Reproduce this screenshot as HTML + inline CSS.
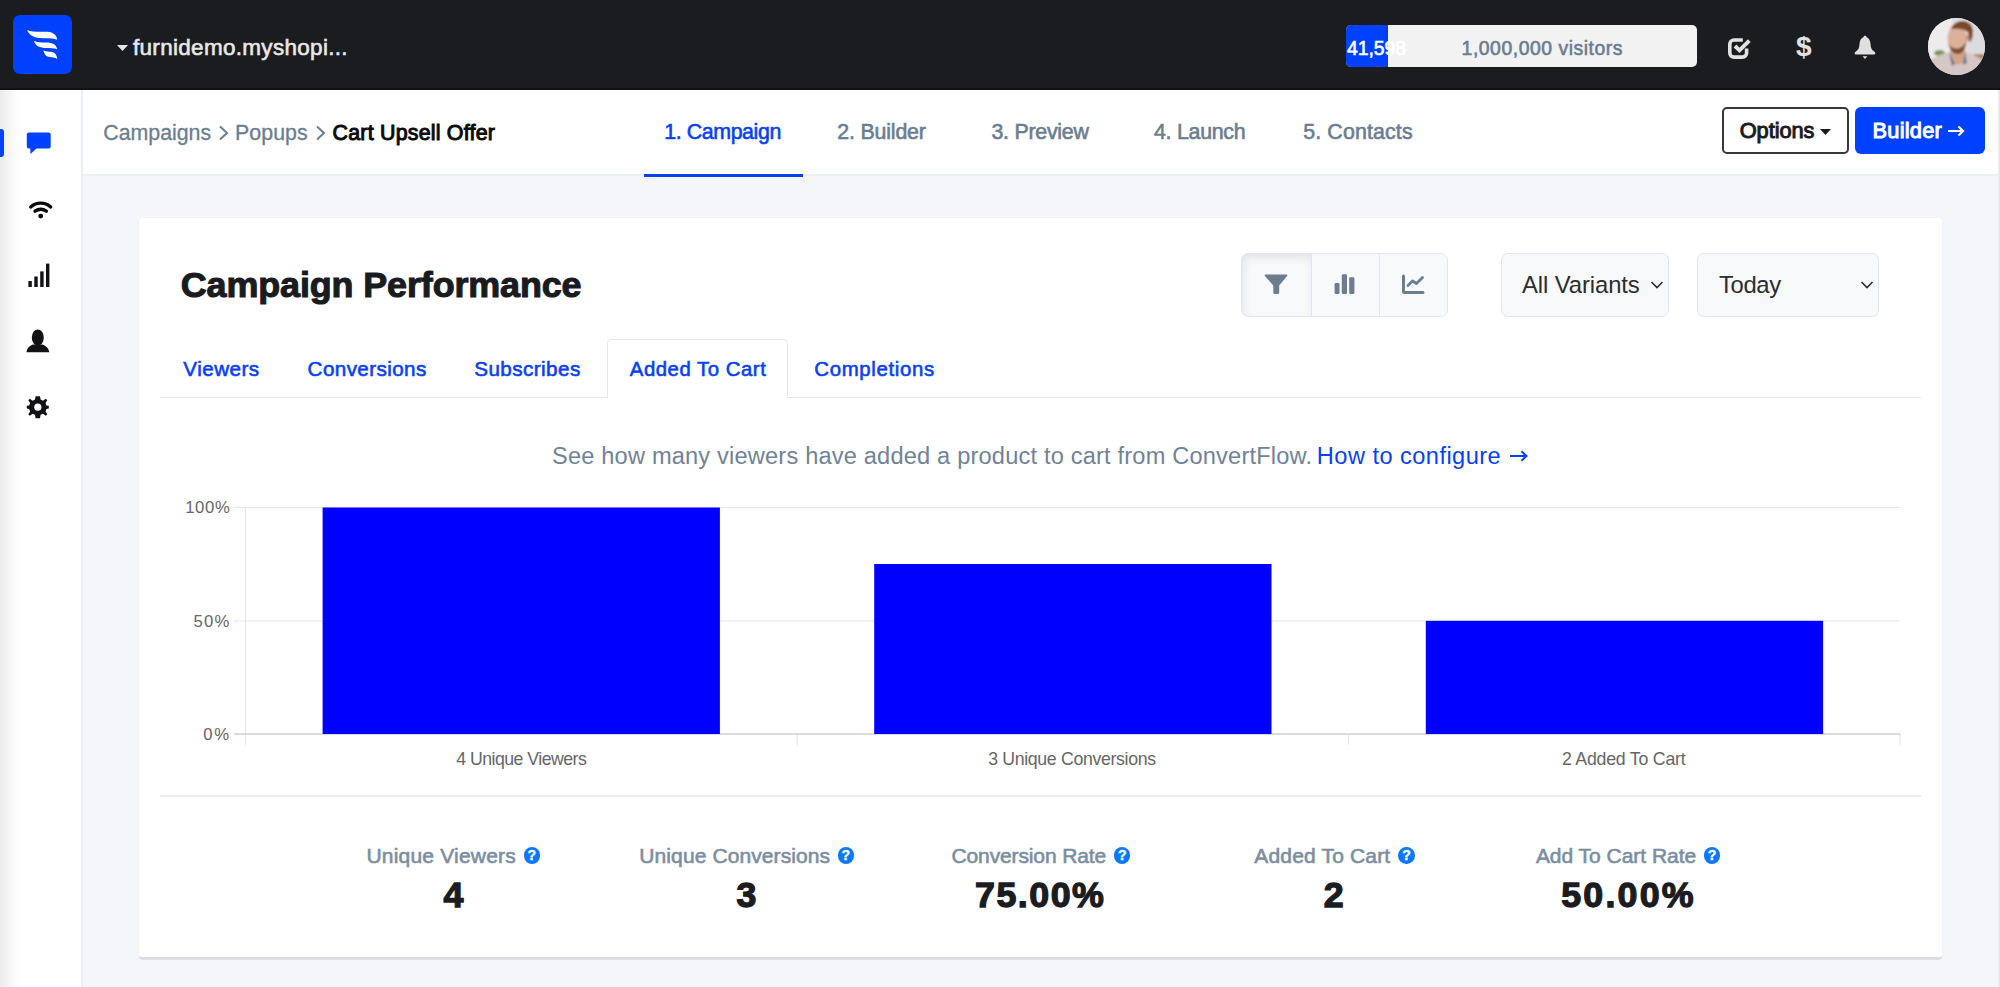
<!DOCTYPE html>
<html><head><meta charset="utf-8">
<style>
*{box-sizing:border-box;margin:0;padding:0}
html,body{width:2000px;height:987px;overflow:hidden;background:#f5f6f9;font-family:"Liberation Sans",sans-serif}
.a{position:absolute;white-space:nowrap}
#top{position:absolute;left:0;top:0;width:2000px;height:90px;background:#1b1c1f}
#side{position:absolute;left:0;top:90px;width:81px;height:897px;background:linear-gradient(90deg,#ebebec 0,#fafafa 14px,#fff 22px)}
#sideb{position:absolute;left:81px;top:90px;width:2px;height:897px;background:#e9eef8}
#sub{position:absolute;left:83px;top:90px;width:1917px;height:86px;background:#fff;border-bottom:2px solid #ebeff6}
#card{position:absolute;left:138px;top:217px;width:1805px;height:743px;background:#fff;border-radius:5px;border:1px solid #f1f2f5;border-bottom:3.5px solid #dcdde2}
.tb{color:#0b3ff2}
.sb{font-weight:normal;-webkit-text-stroke:0.6px currentColor}
.slate{color:#6b7d90}
.L{line-height:1}
.st{top:845.3px;font-size:21px;color:#7b8ea0}
.sv{top:877.6px;font-size:35.8px;font-weight:bold;color:#1b1c1f;-webkit-text-stroke:1.3px #1b1c1f}
.q{top:847.1px;width:16.6px;height:16.6px;border-radius:50%;background:#0b78fa;color:#fff;font-size:14px;font-weight:bold;text-align:center;line-height:17px;-webkit-text-stroke:0.4px #fff}
.q::after{content:"?"}
</style></head><body>
<div id="top"><div class="a" style="left:0;top:88px;width:2000px;height:2px;background:#111214"></div>
  <div class="a" style="left:13px;top:15px;width:59px;height:59px;border-radius:7px;background:#0041ff">
    <svg width="59" height="59" viewBox="0 0 59 59"><g fill="#fff">
      <path d="M14,15 C18,17 24,16.8 32,16.8 C38.5,16.8 43.5,18.5 44.2,24.8 C40,23 36,23.2 30,23.2 C22,23.2 16.5,21 14,15 Z"/>
      <path d="M21,26 C24,27.5 28,27.5 33,27.5 C39.5,27.5 43.5,29.5 44.2,34.3 C41,33 37,33 33,33 C27,33 22.5,31 21,26 Z"/>
      <path d="M30.5,35.5 C33,36.5 35.5,36.6 38,36.8 C41.5,37.2 43.8,39.5 44.2,44 C42,42.3 39,42.2 37,42 C33.5,41.7 31.2,39.8 30.5,35.5 Z"/>
    </g></svg>
  </div>
  <svg class="a" style="left:116px;top:44px" width="13" height="8" viewBox="0 0 13 8"><path d="M1,1 L12,1 L6.5,7 Z" fill="#e6e6e6"/></svg>
  <div class="a L sb" id="shop" style="left:133.0px;top:36.5px;font-size:22.48px;letter-spacing:0.316px;color:#e8e8e8">furnidemo.myshopi...</div>
  <div class="a" style="left:1346px;top:25px;width:351px;height:42px;border-radius:5px;background:#f2f2f3;overflow:hidden">
    <div class="a" style="left:0;top:0;width:42px;height:42px;background:#0041ff"></div>
    <div class="a L sb" id="pv" style="left:1px;top:13.6px;font-size:19.33px;letter-spacing:0.000px;color:#fff">41,598</div>
    <div class="a L sb" id="pt" style="left:115.6px;top:13.6px;font-size:19.33px;letter-spacing:0.553px;color:#6b7d90">1,000,000 visitors</div>
  </div>
  <svg class="a" style="left:1720px;top:30px" width="40" height="35" viewBox="1720 30 40 35">
    <path d="M1742.8,40 H1734 a4.2,4.2 0 0 0 -4.2,4.2 V52.9 a4.2,4.2 0 0 0 4.2,4.2 H1742.4 a4.2,4.2 0 0 0 4.2,-4.2 V48.6" fill="none" stroke="#e2e2e2" stroke-width="3.6"/>
    <path d="M1735,46 L1739.5,50.3 L1749.3,40.6" fill="none" stroke="#e2e2e2" stroke-width="3.9" stroke-linejoin="miter"/>
  </svg>
  <div class="a L" id="dol" style="left:1796px;top:33.2px;font-size:28px;font-weight:bold;color:#e2e2e2">$</div>
  <svg class="a" style="left:1850px;top:30px" width="30" height="32" viewBox="1850 30 30 32">
    <path d="M1865,35.8 C1866,35.8 1866.6,36.5 1866.6,37.3 C1869.2,38.2 1870.2,40.5 1870.5,44 C1870.8,48 1871.7,50 1874.2,51.4 C1875.9,52.3 1875.6,54.6 1873.6,54.6 H1856.4 C1854.4,54.6 1854.1,52.3 1855.8,51.4 C1858.3,50 1859.2,48 1859.5,44 C1859.8,40.5 1860.8,38.2 1863.4,37.3 C1863.4,36.5 1864,35.8 1865,35.8 Z M1862.6,56.2 H1867.4 L1865,59 Z" fill="#e0e0e0"/>
  </svg>
  <div class="a" style="left:1928px;top:18px;width:57px;height:57px;border-radius:50%;overflow:hidden;background:#e2dfe2">
    <svg width="57" height="57" viewBox="0 0 57 57">
      <defs><filter id="bl" x="-20%" y="-20%" width="140%" height="140%"><feGaussianBlur stdDeviation="0.9"/></filter></defs>
      <g filter="url(#bl)">
      <rect x="-2" y="-2" width="61" height="61" fill="#e2dfe2"/>
      <rect x="-2" y="-2" width="26" height="42" fill="#eeebed"/>
      <rect x="40" y="-2" width="19" height="38" fill="#dcdce0"/>
      <ellipse cx="11.5" cy="35" rx="5.5" ry="3" fill="#6f9a55"/>
      <rect x="46" y="36" width="10" height="5" fill="#b5876a"/>
      <path d="M-2,59 L-2,44 C8,38 16,35 22,34 L38,34 C45,36 52,40 59,45 L59,59 Z" fill="#d6c7c7"/>
      <path d="M22,30 L37,30 L38,42 C33,48 26,48 22,42 Z" fill="#d3a38a"/>
      <path d="M21,34 L24,48 L27,46 Z M37,34 L35,47 L39,45 Z" fill="#6a7390"/>
      <ellipse cx="29" cy="20" rx="9.5" ry="13" fill="#dcb09a"/>
      <ellipse cx="40" cy="20" rx="2.2" ry="3.5" fill="#c99378"/>
      <path d="M23,11 C25,4 33,2 38,3.5 C43,5 45.5,10 45,16 C44.5,20 43.5,23 42,24 L40,14 C36,11 30,10 23,11 Z" fill="#7a4a2c"/>
      <path d="M20,25 C22,33 26,36 30,36 C34,36 37.5,32 38.5,23 C36,28 33,30 30,30.5 C26,31 22,29 20,25 Z" fill="#7c4d30"/>
      </g>
    </svg>
  </div>
</div>

<div id="side"></div>
<div id="sideb"></div>
<div class="a" style="left:0;top:129px;width:4px;height:28px;background:#0041ff;border-radius:0 3px 3px 0"></div>
<svg class="a" style="left:0;top:90px" width="81" height="340" viewBox="0 90 81 340">
  <g fill="#0041ff"><rect x="26.8" y="132.6" width="23.9" height="15.8" rx="2"/><path d="M30.2,147.5 L30.5,154 L37.5,147.5 Z"/></g>
  <g fill="none" stroke="#0a0a0a" stroke-width="3.3" stroke-linecap="round">
    <path d="M30.7,206.9 A15.2,15.2 0 0 1 50.7,206.9"/>
    <path d="M35,211.2 A10,10 0 0 1 46.4,211.2"/>
  </g>
  <circle cx="40.7" cy="216.1" r="2.45" fill="#0a0a0a"/>
  <g fill="#121214">
    <rect x="28.4" y="281" width="3.4" height="6"/>
    <rect x="34.3" y="276.5" width="3.4" height="10.5"/>
    <rect x="40.2" y="271.4" width="3.4" height="15.6"/>
    <rect x="46" y="263.6" width="3.4" height="23.4"/>
    <ellipse cx="37.8" cy="337.5" rx="6" ry="8"/>
    <path d="M33,344.5 L42.5,344.5 C46,346 48.5,348 49.3,352.3 H26.4 C27,348 29.5,346 33,344.5 Z"/>
  </g>
  <g transform="translate(37.8,407.2)">
    <path fill="#121214" d="M-2.2,-11 H2.2 L2.8,-7.6 L5.2,-6.5 L8,-8.5 L9.5,-7 L7.7,-4.2 L8.6,-1.8 L11,-1.4 V1.4 L8.6,1.8 L7.7,4.2 L9.5,7 L8,8.5 L5.2,6.5 L2.8,7.6 L2.2,11 H-2.2 L-2.8,7.6 L-5.2,6.5 L-8,8.5 L-9.5,7 L-7.7,4.2 L-8.6,1.8 L-11,1.4 V-1.4 L-8.6,-1.8 L-7.7,-4.2 L-9.5,-7 L-8,-8.5 L-5.2,-6.5 L-2.8,-7.6 Z"/>
    <circle r="3.6" fill="#fff"/>
  </g>
</svg>

<div id="sub">
</div>
<div class="a slate L" id="bc1" style="left:103.3px;top:122.9px;font-size:21.37px;letter-spacing:-0.025px;-webkit-text-stroke:0.3px currentColor">Campaigns</div>
<svg class="a" style="left:218px;top:125px" width="12" height="16" viewBox="0 0 12 16"><path d="M2,1.5 L9,8 L2,14.5" fill="none" stroke="#6b7d90" stroke-width="2"/></svg>
<div class="a slate L" id="bc2" style="left:235px;top:122.9px;font-size:21.37px;letter-spacing:0.06px;-webkit-text-stroke:0.3px currentColor">Popups</div>
<svg class="a" style="left:315px;top:125px" width="12" height="16" viewBox="0 0 12 16"><path d="M2,1.5 L9,8 L2,14.5" fill="none" stroke="#6b7d90" stroke-width="2"/></svg>
<div class="a L sb" id="bc3" style="left:332.6px;top:122.9px;font-size:21.37px;letter-spacing:0.225px;color:#0a0a0a;-webkit-text-stroke:1px #0a0a0a">Cart Upsell Offer</div>

<div class="a L sb" id="t1" style="left:664.2px;top:122.2px;font-size:21.37px;letter-spacing:-0.400px;color:#0b3ff2">1. Campaign</div>
<div class="a" style="left:644px;top:174px;width:159px;height:3px;background:#0b3ff2"></div>
<div class="a slate L sb" id="t2" style="left:837.3px;top:122.2px;font-size:21.37px;letter-spacing:-0.178px">2. Builder</div>
<div class="a slate L sb" id="t3" style="left:991.5px;top:122.2px;font-size:21.37px;letter-spacing:-0.267px">3. Preview</div>
<div class="a slate L sb" id="t4" style="left:1154.0px;top:122.2px;font-size:21.37px;letter-spacing:-0.275px">4. Launch</div>
<div class="a slate L sb" id="t5" style="left:1303.2px;top:122.2px;font-size:21.37px;letter-spacing:0.140px">5. Contacts</div>

<div class="a" style="left:1722px;top:107px;width:127px;height:47px;border:2px solid #38383b;border-radius:5px;background:#fff"></div>
<div class="a L sb" id="opt" style="left:1739.7px;top:119.8px;font-size:21.8px;letter-spacing:-0.050px;color:#1b1b1d;-webkit-text-stroke:1px #1b1b1d">Options</div>
<svg class="a" style="left:1819px;top:128px" width="13" height="8" viewBox="0 0 13 8"><path d="M1,1 L12,1 L6.5,7 Z" fill="#1b1b1d"/></svg>
<div class="a" style="left:1855px;top:107px;width:130px;height:47px;border-radius:6px;background:#0041ff"></div>
<div class="a L sb" id="bld" style="left:1872.6px;top:119.8px;font-size:21.8px;letter-spacing:0.233px;color:#fff;-webkit-text-stroke:1px #fff">Builder</div>
<svg class="a" style="left:1947px;top:125px" width="18" height="12" viewBox="0 0 18 12"><path d="M1,6 H16 M11.5,1.5 L16,6 L11.5,10.5" fill="none" stroke="#fff" stroke-width="2.2"/></svg>
<div class="a" style="left:1998px;top:90px;width:2px;height:897px;background:linear-gradient(90deg,#f0f0f0,#e4e4e4)"></div>

<div id="card"></div>
<div class="a L" id="title" style="left:180.8px;top:267.9px;font-size:35.9px;letter-spacing:-0.111px;font-weight:bold;color:#1a1b1e;-webkit-text-stroke:1.1px #1a1b1e">Campaign Performance</div>

<div class="a" style="left:1241px;top:253px;width:207px;height:64px;border:1px solid #e4e5ec;border-radius:7px;background:#f8f9fb;overflow:hidden">
  <div class="a" style="left:0;top:0;width:69px;height:62px;box-shadow:inset 2px 4px 8px rgba(0,0,0,0.09)"></div>
  <div class="a" style="left:69px;top:0;width:1px;height:62px;background:#e4e5ec"></div>
  <div class="a" style="left:137px;top:0;width:1px;height:62px;background:#e4e5ec"></div>
</div>
<svg class="a" style="left:1241px;top:253px" width="207" height="64" viewBox="1241 253 207 64">
  <path d="M1265.5,274.5 H1286.5 C1287.3,274.5 1287.6,275.4 1287.1,276 L1279.2,285.5 V292.5 C1279.2,293.5 1278.5,294 1277.5,294 H1275 C1274,294 1273.3,293.5 1273.3,292.5 V285.5 L1264.9,276 C1264.4,275.4 1264.7,274.5 1265.5,274.5 Z" fill="#6c7d8f"/>
  <rect x="1334.6" y="283" width="4.9" height="11" rx="1.2" fill="#6c7d8f"/>
  <rect x="1341.8" y="274.3" width="5.2" height="19.7" rx="1.2" fill="#6c7d8f"/>
  <rect x="1349.2" y="277.2" width="5.2" height="16.8" rx="1.2" fill="#6c7d8f"/>
  <path d="M1403.5,276 V291.5 C1403.5,292 1403.8,292.5 1404.5,292.5 H1423" fill="none" stroke="#6c7d8f" stroke-width="3" stroke-linecap="round"/>
  <path d="M1408,285.5 L1412.5,281 L1416.5,283.5 L1422.5,277.5" fill="none" stroke="#6c7d8f" stroke-width="2.8" stroke-linecap="round" stroke-linejoin="round"/>
</svg>

<div class="a" style="left:1501px;top:253px;width:168px;height:64px;border:1px solid #e4e5ec;border-radius:7px;background:#f8f9fb"></div>
<div class="a L" id="var" style="left:1522px;top:273.4px;font-size:23.84px;letter-spacing:-0.091px;color:#2b2d31">All Variants</div>
<svg class="a" style="left:1650px;top:280px" width="14" height="10" viewBox="0 0 14 10"><path d="M1.5,2 L7,7.5 L12.5,2" fill="none" stroke="#2b2d31" stroke-width="1.6"/></svg>
<div class="a" style="left:1697px;top:253px;width:182px;height:64px;border:1px solid #e4e5ec;border-radius:7px;background:#f8f9fb"></div>
<div class="a L" id="today" style="left:1719px;top:273.4px;font-size:23.84px;letter-spacing:-0.35px;color:#2b2d31">Today</div>
<svg class="a" style="left:1860px;top:280px" width="14" height="10" viewBox="0 0 14 10"><path d="M1.5,2 L7,7.5 L12.5,2" fill="none" stroke="#2b2d31" stroke-width="1.6"/></svg>

<div class="a" style="left:160px;top:397px;width:1761px;height:1px;background:#e4e6ec"></div>
<div class="a" style="left:607px;top:339px;width:181px;height:59px;border:1px solid #e4e6ec;border-bottom:none;border-radius:5px 5px 0 0;background:#fff"></div>
<div class="a L tb sb" id="tv" style="left:183.3px;top:358.7px;font-size:20.64px;letter-spacing:0.467px">Viewers</div>
<div class="a L tb sb" id="tc" style="left:307.6px;top:358.7px;font-size:20.64px;letter-spacing:0.400px">Conversions</div>
<div class="a L tb sb" id="ts" style="left:474.2px;top:358.7px;font-size:20.64px;letter-spacing:0.444px">Subscribes</div>
<div class="a L tb sb" id="ta" style="left:629.8px;top:358.5px;font-size:20.35px;letter-spacing:0.525px">Added To Cart</div>
<div class="a L tb sb" id="tco" style="left:814.3px;top:358.5px;font-size:20.35px;letter-spacing:0.680px">Completions</div>

<div class="a L slate" id="desc" style="color:#718396;left:552px;top:444.8px;font-size:23.62px;letter-spacing:0.182px">See how many viewers have added a product to cart from ConvertFlow.</div>
<div class="a L" id="link" style="left:1316.8px;top:444.8px;font-size:23.62px;letter-spacing:0.45px;color:#0b3ff2">How to configure</div>
<svg class="a" style="left:1509px;top:449px" width="20" height="14" viewBox="0 0 20 14"><path d="M1,7 H17.5 M12.5,2.2 L17.5,7 L12.5,11.8" fill="none" stroke="#0b3ff2" stroke-width="2"/></svg>

<svg class="a" style="left:0;top:0" width="2000" height="800" viewBox="0 0 2000 800">
  <g stroke="#e5e5e5" stroke-width="1.2">
    <path d="M234,507.5 H1900 M234,621 H1900"/>
    <path d="M245.5,507 V745"/>
    <path d="M797,734 V745 M1348.5,734 V745 M1900,734 V745"/>
  </g>
  <path d="M234,734 H1900" stroke="#cfcfcf" stroke-width="1.4"/>
  <g fill="#0000ff">
    <rect x="322.6" y="507.5" width="397.3" height="226.5"/>
    <rect x="874.2" y="564" width="397.3" height="170"/>
    <rect x="1425.8" y="620.8" width="397.3" height="113.2"/>
  </g>
</svg>
<div class="a L" id="y100" style="left:185.2px;top:500px;font-size:16.72px;letter-spacing:0.633px;color:#666">100%</div>
<div class="a L" id="y50" style="left:193.6px;top:614px;font-size:16.72px;letter-spacing:1.15px;color:#666">50%</div>
<div class="a L" id="y0" style="left:203.3px;top:727px;font-size:16.72px;letter-spacing:1.6px;color:#666">0%</div>
<div class="a L" id="x1" style="left:456.2px;top:751.3px;font-size:17.73px;letter-spacing:-0.527px;color:#666">4 Unique Viewers</div>
<div class="a L" id="x2" style="left:988.2px;top:751.3px;font-size:17.73px;letter-spacing:-0.342px;color:#666">3 Unique Conversions</div>
<div class="a L" id="x3" style="left:1562px;top:751.3px;font-size:17.73px;letter-spacing:-0.221px;color:#666">2 Added To Cart</div>

<div class="a" style="left:160px;top:795px;width:1761px;height:2px;background:#ecedf1"></div>

<div class="a L st sb" id="s1" style="left:366.5px;letter-spacing:0.192px">Unique Viewers</div>
<div class="a L st sb" id="s2" style="left:639.3px;letter-spacing:0.100px">Unique Conversions</div>
<div class="a L st sb" id="s3" style="left:951.5px;letter-spacing:-0.129px">Conversion Rate</div>
<div class="a L st sb" id="s4" style="left:1254.3px;letter-spacing:0.167px">Added To Cart</div>
<div class="a L st sb" id="s5" style="left:1535.9px;letter-spacing:-0.027px">Add To Cart Rate</div>
<div class="a q" style="left:523.6px"></div>
<div class="a q" style="left:837.6px"></div>
<div class="a q" style="left:1113.9px"></div>
<div class="a q" style="left:1398.2px"></div>
<div class="a q" style="left:1703.8px"></div>

<div class="a L sv" id="v1" style="left:443.5px">4</div>
<div class="a L sv" id="v2" style="left:736.6px">3</div>
<div class="a L sv" id="v3" style="left:975px;letter-spacing:1.5px">75.00%</div>
<div class="a L sv" id="v4" style="left:1323.8px">2</div>
<div class="a L sv" id="v5" style="left:1561.2px;letter-spacing:2.2px">50.00%</div>
</body></html>
